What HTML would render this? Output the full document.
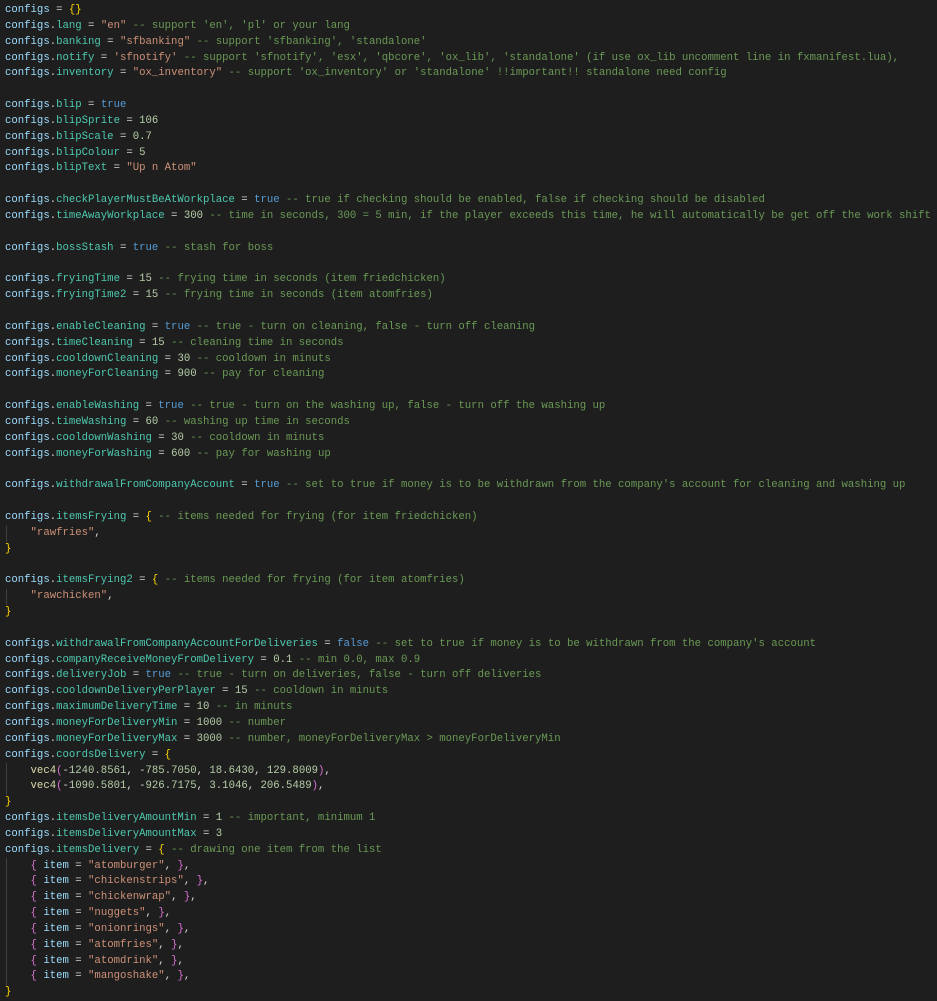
<!DOCTYPE html>
<html><head><meta charset="utf-8"><style>
html,body{margin:0;padding:0;background:#1e1e1e;width:937px;height:1001px;overflow:hidden}
pre{margin:0;padding:0 0 0 5px;font-family:"Liberation Mono",monospace;font-size:10.65px;line-height:15.84px;color:#d4d4d4;position:relative;top:3px;white-space:pre}
.v{color:#9cdcfe}.f{color:#4ec9b0}.s{color:#ce9178}.c{color:#6a9955}.n{color:#b5cea8}.k{color:#569cd6}.y{color:#ffd700}.m{color:#da70d6}.fn{color:#dcdcaa}
.g{position:absolute;left:6px;width:1px;background:#404040}
</style></head><body>
<div class="g" style="top:526px;height:16px"></div>
<div class="g" style="top:589px;height:16px"></div>
<div class="g" style="top:763px;height:32px"></div>
<div class="g" style="top:858px;height:128px"></div>
<pre><span class="v">configs</span> = <span class="y">{}</span>
<span class="v">configs</span>.<span class="f">lang</span> = <span class="s">"en"</span> <span class="c">-- support 'en', 'pl' or your lang</span>
<span class="v">configs</span>.<span class="f">banking</span> = <span class="s">"sfbanking"</span> <span class="c">-- support 'sfbanking', 'standalone'</span>
<span class="v">configs</span>.<span class="f">notify</span> = <span class="s">'sfnotify'</span> <span class="c">-- support 'sfnotify', 'esx', 'qbcore', 'ox_lib', 'standalone' (if use ox_lib uncomment line in fxmanifest.lua),</span>
<span class="v">configs</span>.<span class="f">inventory</span> = <span class="s">"ox_inventory"</span> <span class="c">-- support 'ox_inventory' or 'standalone' !!important!! standalone need config</span>

<span class="v">configs</span>.<span class="f">blip</span> = <span class="k">true</span>
<span class="v">configs</span>.<span class="f">blipSprite</span> = <span class="n">106</span>
<span class="v">configs</span>.<span class="f">blipScale</span> = <span class="n">0.7</span>
<span class="v">configs</span>.<span class="f">blipColour</span> = <span class="n">5</span>
<span class="v">configs</span>.<span class="f">blipText</span> = <span class="s">"Up n Atom"</span>

<span class="v">configs</span>.<span class="f">checkPlayerMustBeAtWorkplace</span> = <span class="k">true</span> <span class="c">-- true if checking should be enabled, false if checking should be disabled</span>
<span class="v">configs</span>.<span class="f">timeAwayWorkplace</span> = <span class="n">300</span> <span class="c">-- time in seconds, 300 = 5 min, if the player exceeds this time, he will automatically be get off the work shift</span>

<span class="v">configs</span>.<span class="f">bossStash</span> = <span class="k">true</span> <span class="c">-- stash for boss</span>

<span class="v">configs</span>.<span class="f">fryingTime</span> = <span class="n">15</span> <span class="c">-- frying time in seconds (item friedchicken)</span>
<span class="v">configs</span>.<span class="f">fryingTime2</span> = <span class="n">15</span> <span class="c">-- frying time in seconds (item atomfries)</span>

<span class="v">configs</span>.<span class="f">enableCleaning</span> = <span class="k">true</span> <span class="c">-- true - turn on cleaning, false - turn off cleaning</span>
<span class="v">configs</span>.<span class="f">timeCleaning</span> = <span class="n">15</span> <span class="c">-- cleaning time in seconds</span>
<span class="v">configs</span>.<span class="f">cooldownCleaning</span> = <span class="n">30</span> <span class="c">-- cooldown in minuts</span>
<span class="v">configs</span>.<span class="f">moneyForCleaning</span> = <span class="n">900</span> <span class="c">-- pay for cleaning</span>

<span class="v">configs</span>.<span class="f">enableWashing</span> = <span class="k">true</span> <span class="c">-- true - turn on the washing up, false - turn off the washing up</span>
<span class="v">configs</span>.<span class="f">timeWashing</span> = <span class="n">60</span> <span class="c">-- washing up time in seconds</span>
<span class="v">configs</span>.<span class="f">cooldownWashing</span> = <span class="n">30</span> <span class="c">-- cooldown in minuts</span>
<span class="v">configs</span>.<span class="f">moneyForWashing</span> = <span class="n">600</span> <span class="c">-- pay for washing up</span>

<span class="v">configs</span>.<span class="f">withdrawalFromCompanyAccount</span> = <span class="k">true</span> <span class="c">-- set to true if money is to be withdrawn from the company's account for cleaning and washing up</span>

<span class="v">configs</span>.<span class="f">itemsFrying</span> = <span class="y">{</span> <span class="c">-- items needed for frying (for item friedchicken)</span>
    <span class="s">"rawfries"</span>,
<span class="y">}</span>

<span class="v">configs</span>.<span class="f">itemsFrying2</span> = <span class="y">{</span> <span class="c">-- items needed for frying (for item atomfries)</span>
    <span class="s">"rawchicken"</span>,
<span class="y">}</span>

<span class="v">configs</span>.<span class="f">withdrawalFromCompanyAccountForDeliveries</span> = <span class="k">false</span> <span class="c">-- set to true if money is to be withdrawn from the company's account</span>
<span class="v">configs</span>.<span class="f">companyReceiveMoneyFromDelivery</span> = <span class="n">0.1</span> <span class="c">-- min 0.0, max 0.9</span>
<span class="v">configs</span>.<span class="f">deliveryJob</span> = <span class="k">true</span> <span class="c">-- true - turn on deliveries, false - turn off deliveries</span>
<span class="v">configs</span>.<span class="f">cooldownDeliveryPerPlayer</span> = <span class="n">15</span> <span class="c">-- cooldown in minuts</span>
<span class="v">configs</span>.<span class="f">maximumDeliveryTime</span> = <span class="n">10</span> <span class="c">-- in minuts</span>
<span class="v">configs</span>.<span class="f">moneyForDeliveryMin</span> = <span class="n">1000</span> <span class="c">-- number</span>
<span class="v">configs</span>.<span class="f">moneyForDeliveryMax</span> = <span class="n">3000</span> <span class="c">-- number, moneyForDeliveryMax &gt; moneyForDeliveryMin</span>
<span class="v">configs</span>.<span class="f">coordsDelivery</span> = <span class="y">{</span>
    <span class="fn">vec4</span><span class="m">(</span>-<span class="n">1240.8561</span>, -<span class="n">785.7050</span>, <span class="n">18.6430</span>, <span class="n">129.8009</span><span class="m">)</span>,
    <span class="fn">vec4</span><span class="m">(</span>-<span class="n">1090.5801</span>, -<span class="n">926.7175</span>, <span class="n">3.1046</span>, <span class="n">206.5489</span><span class="m">)</span>,
<span class="y">}</span>
<span class="v">configs</span>.<span class="f">itemsDeliveryAmountMin</span> = <span class="n">1</span> <span class="c">-- important, minimum 1</span>
<span class="v">configs</span>.<span class="f">itemsDeliveryAmountMax</span> = <span class="n">3</span>
<span class="v">configs</span>.<span class="f">itemsDelivery</span> = <span class="y">{</span> <span class="c">-- drawing one item from the list</span>
    <span class="m">{</span> <span class="v">item</span> = <span class="s">"atomburger"</span>, <span class="m">}</span>,
    <span class="m">{</span> <span class="v">item</span> = <span class="s">"chickenstrips"</span>, <span class="m">}</span>,
    <span class="m">{</span> <span class="v">item</span> = <span class="s">"chickenwrap"</span>, <span class="m">}</span>,
    <span class="m">{</span> <span class="v">item</span> = <span class="s">"nuggets"</span>, <span class="m">}</span>,
    <span class="m">{</span> <span class="v">item</span> = <span class="s">"onionrings"</span>, <span class="m">}</span>,
    <span class="m">{</span> <span class="v">item</span> = <span class="s">"atomfries"</span>, <span class="m">}</span>,
    <span class="m">{</span> <span class="v">item</span> = <span class="s">"atomdrink"</span>, <span class="m">}</span>,
    <span class="m">{</span> <span class="v">item</span> = <span class="s">"mangoshake"</span>, <span class="m">}</span>,
<span class="y">}</span></pre>
</body></html>
